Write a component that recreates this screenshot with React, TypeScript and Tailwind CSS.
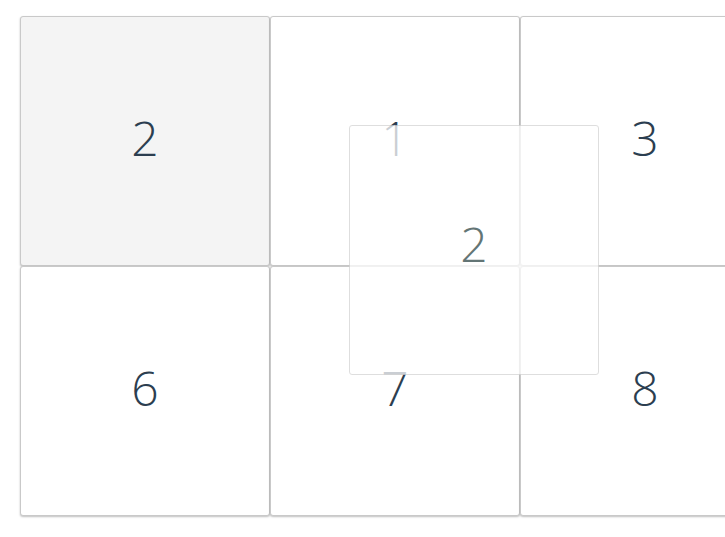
import { useState } from 'react';

const items = [2, 1, 3, 4, 5, 6, 7, 8, 9, 10];

export default function App() {
  const [dragging] = useState(2);

  return (
    <div className="relative w-screen h-screen overflow-hidden bg-white font-['Open_Sans','Liberation_Sans',sans-serif]">
      <div className="pl-5 pt-4">
        <div className="flex flex-wrap w-[1250px]">
          {items.map((n) => (
            <div
              key={n}
              className={`w-[250px] h-[250px] flex items-center justify-center border border-[#c9c9c9] rounded-[3px] shadow-[0_1px_2px_rgba(0,0,0,0.25)] text-[48px] font-light text-[#2c3e50] pb-[6px] ${
                n === dragging ? 'bg-[#f4f4f4]' : 'bg-white'
              }`}
            >
              {n}
            </div>
          ))}
        </div>
      </div>

      {/* drag ghost */}
      <div className="absolute left-[349px] top-[125px] w-[250px] h-[250px] flex items-center justify-center border border-[#d4d4d4] rounded-[3px] bg-white opacity-75 text-[48px] font-light text-[#2f4848] pb-[13px]">
        {dragging}
      </div>
    </div>
  );
}
